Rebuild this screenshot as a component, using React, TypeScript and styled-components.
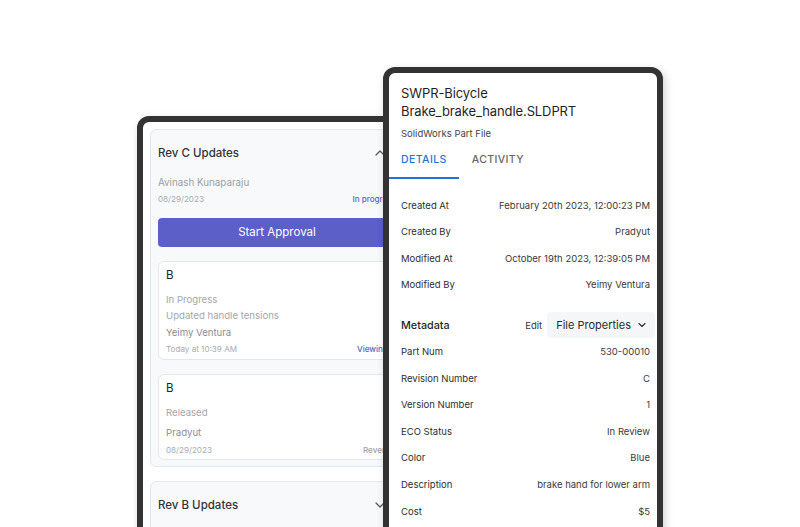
import React from "react";
import styled, { createGlobalStyle } from "styled-components";
import { ChevronUp, ChevronDown } from "lucide-react";

const GlobalStyle = createGlobalStyle`
  html, body {
    margin: 0;
    padding: 0;
    background: #ffffff;
  }
  body {
    font-family: Inter, "Noto Sans", Arial, sans-serif;
    color: #2b2b2b;
  }
  * {
    box-sizing: border-box;
  }
`;

const Stage = styled.div`
  width: 800px;
  height: 527px;
  overflow: hidden;
  display: flex;
  align-items: flex-start;
`;

const Phone = styled.div<{ $top: number; $left: number; $front?: boolean }>`
  flex-shrink: 0;
  width: 280px;
  height: 480px;
  margin: ${(p) => p.$top}px 0 0 ${(p) => p.$left}px;
  border: 6px solid #333333;
  border-radius: 12px;
  background: #ffffff;
  overflow: hidden;
  position: relative;
  z-index: ${(p) => (p.$front ? 2 : 1)};
  box-shadow: 2px 3px 8px rgba(0, 0, 0, 0.18);
`;

/* ---------- left phone: revision updates ---------- */

const LeftBody = styled.div`
  padding: 7px;
  display: flex;
  flex-direction: column;
  gap: 14px;
`;

const UpdateGroup = styled.div`
  background: #f8f9fb;
  border: 1px solid #e6e8ec;
  border-radius: 6px;
  padding: 0 7px 6px;
`;

const GroupHeader = styled.div`
  display: flex;
  align-items: center;
  justify-content: space-between;
  padding: 14px 0;
  line-height: 18px;
  font-size: 11.5px;
  font-weight: 500;
  color: #333333;
  svg {
    margin-right: 8px;
    color: #555555;
  }
`;

const Author = styled.div`
  font-size: 9.8px;
  line-height: 14px;
  color: #9b9ea4;
`;

const MetaRow = styled.div<{ $gap?: number }>`
  display: flex;
  justify-content: space-between;
  align-items: center;
  margin-top: ${(p) => p.$gap ?? 0}px;
  font-size: 8.1px;
  line-height: 16.5px;
  color: #a8abb0;
`;

const StatusLink = styled.span<{ $accent?: boolean }>`
  font-weight: 500;
  color: ${(p) => (p.$accent ? "#5b5fc7" : "#a0a3a8")};
`;

const ApproveButton = styled.button`
  display: block;
  width: 100%;
  height: 29px;
  margin: 10px 0 14px;
  border: none;
  border-radius: 4px;
  background: #5b5fc7;
  color: #ffffff;
  font-family: inherit;
  font-size: 11.5px;
  font-weight: 400;
`;

const Revision = styled.div`
  background: #ffffff;
  border: 1px solid #e5e7eb;
  border-radius: 6px;
  padding: 5px 7px 1px;
  & + & {
    margin-top: 14px;
  }
`;

const RevLetter = styled.div`
  font-size: 11.5px;
  line-height: 16px;
  font-weight: 400;
  color: #222222;
  margin-bottom: 9px;
`;

const RevLine = styled.div<{ $strong?: boolean; $gap?: number }>`
  font-size: 9.6px;
  line-height: 16.5px;
  margin-top: ${(p) => p.$gap ?? 0}px;
  color: ${(p) => (p.$strong ? "#8a8d93" : "#a3a6ab")};
`;

/* ---------- right phone: file details ---------- */

const FileHeader = styled.div`
  padding: 11px 12px 0;
`;

const FileTitle = styled.div`
  font-size: 13px;
  letter-spacing: -0.1px;
  line-height: 18.4px;
  color: #1f1f1f;
`;

const FileType = styled.div`
  margin-top: 6px;
  font-size: 9.5px;
  line-height: 14px;
  color: #444444;
`;

const Tabs = styled.div`
  display: flex;
  margin-top: 2px;
`;

const Tab = styled.div<{ $active?: boolean }>`
  padding: 10px 12px;
  line-height: 14px;
  font-size: 10.5px;
  font-weight: 500;
  letter-spacing: 0.4px;
  color: ${(p) => (p.$active ? "#1976d2" : "#666666")};
  border-bottom: 2px solid ${(p) => (p.$active ? "#1976d2" : "transparent")};
  & + & {
    padding-left: 13px;
  }
`;

const Details = styled.div`
  padding: 13px 7px 0 12px;
`;

const DetailRow = styled.div`
  display: flex;
  justify-content: space-between;
  align-items: center;
  height: 26.6px;
  font-size: 9.5px;
  color: #2e2e2e;
`;

const DetailValue = styled.span`
  color: #3a3a3a;
`;

const SectionHeader = styled.div`
  display: flex;
  align-items: center;
  height: 26px;
  margin-top: 14px;
`;

const SectionTitle = styled.div`
  flex: 1;
  font-size: 10.8px;
  font-weight: 500;
  color: #1f1f1f;
`;

const EditLink = styled.span`
  font-size: 9.5px;
  color: #333333;
  margin-right: 5px;
`;

const PropertiesSelect = styled.div`
  display: flex;
  align-items: center;
  gap: 5px;
  height: 26px;
  margin-right: -5px;
  padding: 0 7px 0 9px;
  border-radius: 4px;
  background: #f5f6f8;
  font-size: 11px;
  color: #2b2b2b;
`;

const createdRows = [
  ["Created At", "February 20th 2023, 12:00:23 PM"],
  ["Created By", "Pradyut"],
  ["Modified At", "October 19th 2023, 12:39:05 PM"],
  ["Modified By", "Yeimy Ventura"],
];

const metadataRows = [
  ["Part Num", "530-00010"],
  ["Revision Number", "C"],
  ["Version Number", "1"],
  ["ECO Status", "In Review"],
  ["Color", "Blue"],
  ["Description", "brake hand for lower arm"],
  ["Cost", "$5"],
];

const App = () => {
  return (
    <>
      <GlobalStyle />
      <Stage>
        <Phone $top={116} $left={137}>
          <LeftBody>
            <UpdateGroup>
              <GroupHeader>
                Rev C Updates
                <ChevronUp size={16} strokeWidth={1.8} />
              </GroupHeader>
              <Author>Avinash Kunaparaju</Author>
              <MetaRow $gap={1}>
                <span>08/29/2023</span>
                <StatusLink $accent>In progress</StatusLink>
              </MetaRow>
              <ApproveButton>Start Approval</ApproveButton>
              <Revision>
                <RevLetter>B</RevLetter>
                <RevLine>In Progress</RevLine>
                <RevLine>Updated handle tensions</RevLine>
                <RevLine $strong>Yeimy Ventura</RevLine>
                <MetaRow>
                  <span>Today at 10:39 AM</span>
                  <StatusLink $accent>Viewing</StatusLink>
                </MetaRow>
              </Revision>
              <Revision>
                <RevLetter>B</RevLetter>
                <RevLine>Released</RevLine>
                <RevLine $strong $gap={4}>
                  Pradyut
                </RevLine>
                <MetaRow>
                  <span>08/29/2023</span>
                  <StatusLink>Revert</StatusLink>
                </MetaRow>
              </Revision>
            </UpdateGroup>
            <UpdateGroup>
              <GroupHeader>
                Rev B Updates
                <ChevronDown size={16} strokeWidth={1.8} />
              </GroupHeader>
            </UpdateGroup>
          </LeftBody>
        </Phone>

        <Phone $top={67} $left={-34} $front>
          <FileHeader>
            <FileTitle>
              SWPR-Bicycle
              <br />
              Brake_brake_handle.SLDPRT
            </FileTitle>
            <FileType>SolidWorks Part File</FileType>
          </FileHeader>
          <Tabs>
            <Tab $active>DETAILS</Tab>
            <Tab>ACTIVITY</Tab>
          </Tabs>
          <Details>
            {createdRows.map(([label, value]) => (
              <DetailRow key={label}>
                <span>{label}</span>
                <DetailValue>{value}</DetailValue>
              </DetailRow>
            ))}
            <SectionHeader>
              <SectionTitle>Metadata</SectionTitle>
              <EditLink>Edit</EditLink>
              <PropertiesSelect>
                File Properties
                <ChevronDown size={12} strokeWidth={2.2} />
              </PropertiesSelect>
            </SectionHeader>
            {metadataRows.map(([label, value]) => (
              <DetailRow key={label}>
                <span>{label}</span>
                <DetailValue>{value}</DetailValue>
              </DetailRow>
            ))}
          </Details>
        </Phone>
      </Stage>
    </>
  );
};

export default App;
